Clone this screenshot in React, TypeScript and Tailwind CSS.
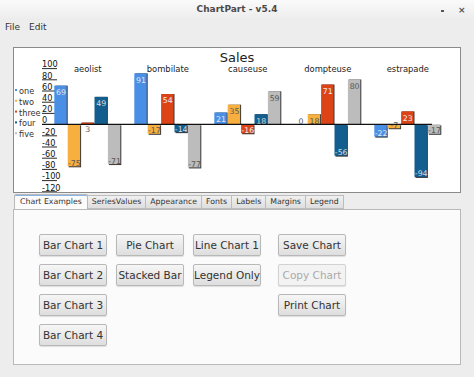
import React from 'react';

const series = [
  { name: 'one', color: '#4a8fe6', text: '#e6e6e6' },
  { name: 'two', color: '#f7b040', text: '#555555' },
  { name: 'three', color: '#dc4417', text: '#eeeeee' },
  { name: 'four', color: '#135e8e', text: '#dddddd' },
  { name: 'five', color: '#bcbcbc', text: '#555555' },
];

const groups = [
  { name: 'aeolist', values: [69, -75, 3, 49, -71] },
  { name: 'bombilate', values: [91, -17, 54, -14, -77] },
  { name: 'causeuse', values: [21, 35, -16, 18, 59] },
  { name: 'dompteuse', values: [0, 18, 71, -56, 80] },
  { name: 'estrapade', values: [-22, -7, 23, -94, -17] },
];

const ZERO = 124.3;
const SCALE = 0.56;
const BAR = 13.4;
const ticks = [100, 80, 60, 40, 20, 0, -20, -40, -60, -80, -100, -120];

const SalesChart: React.FC = () => {
  return (
    <svg width={446} height={144} viewBox="14 48 446 144" className="block" style={{ fontFamily: '"DejaVu Sans", sans-serif' }}>
      <rect x={14} y={48} width={446} height={144} fill="#ffffff" />
      <text x={237} y={62} fontSize={13} textAnchor="middle" fill="#222">Sales</text>

      {/* y axis */}
      {ticks.map((t) => {
        const y = ZERO - t * SCALE;
        return (
          <g key={t}>
            <text x={42} y={y - 1} fontSize={8.2} fill="#111">{t}</text>
            {t !== 0 && <line x1={42} x2={57} y1={y + 0.3} y2={y + 0.3} stroke="#111" strokeWidth={0.9} />}
          </g>
        );
      })}

      {/* legend */}
      {series.map((s, i) => {
        const by = 94 + i * 10.8;
        return (
          <g key={s.name}>
            <rect x={15} y={by - 5} width={2} height={2} fill={s.color} />
            <text x={19} y={by} fontSize={8.2} fill="#333">{s.name}</text>
          </g>
        );
      })}

      {/* bars */}
      {groups.map((g, gi) => {
        const start = 54.3 + gi * 80;
        return (
          <g key={g.name}>
            <text x={start + 33.5} y={72} fontSize={8.4} textAnchor="middle" fill="#222">{g.name}</text>
            {g.values.map((v, i) => {
              const s = series[i];
              const x = start + i * BAR;
              const h = Math.abs(v) * SCALE;
              const y = v > 0 ? ZERO - h : ZERO;
              const outside = h < 5;
              const ly = v > 0 ? y + 9.3 : ZERO + h - 0.5;
              return (
                <g key={i}>
                  {h > 0 && <rect x={x + 1} y={y + (v > 0 ? 0 : 1)} width={BAR - 1} height={h} fill="#3a3a3a" />}
                  {h > 0 && <rect x={x} y={y} width={BAR - 1} height={h} fill={s.color} />}
                  <text x={x + BAR / 2} y={ly} fontSize={7.8} textAnchor="middle" fill={outside ? '#555' : s.text}>{v}</text>
                </g>
              );
            })}
          </g>
        );
      })}

      <line x1={42} x2={432} y1={ZERO} y2={ZERO} stroke="#111" strokeWidth={1.3} />
    </svg>
  );
};

const Btn: React.FC<{ label: string; disabled?: boolean; className?: string }> = ({ label, disabled, className = '' }) => (
  <button
    className={
      'h-[22px] w-[68px] rounded-[2px] border text-[10.5px] leading-none whitespace-nowrap overflow-hidden shadow-[0_1px_1px_rgba(0,0,0,0.12)] ' +
      (disabled
        ? 'border-[#d2d2d2] bg-[#f3f3f3] text-[#aaaaaa] '
        : 'border-[#b8b8b8] bg-gradient-to-b from-[#f6f6f6] to-[#dedede] text-[#333333] ') +
      className
    }
  >
    {label}
  </button>
);

const tabs = ['Chart Examples', 'SeriesValues', 'Appearance', 'Fonts', 'Labels', 'Margins', 'Legend'];

export default function App() {
  return (
    <div className="w-[474px] h-[377px] bg-[#ededed] flex flex-col overflow-hidden" style={{ fontFamily: '"DejaVu Sans", sans-serif' }}>
      {/* title bar */}
      <div className="h-[20px] relative flex items-center justify-center bg-gradient-to-b from-[#fafafa] to-[#ececec]">
        <span className="text-[9px] font-bold text-[#4a4a4a]">ChartPart - v5.4</span>
        <span className="absolute left-[441px] top-[10px] w-[3px] h-[2px] bg-[#555]" />
        <span className="absolute left-[458px] top-[4px] text-[9px] font-bold text-[#555]">×</span>
      </div>

      {/* menu */}
      <div className="h-[16px] flex items-center gap-[9px] pl-[5px] text-[9px] text-[#333]">
        <span>File</span>
        <span>Edit</span>
      </div>

      {/* chart */}
      <div className="ml-[13px] mt-[11px] w-[448px] h-[146px] border border-[#8a8a8a] bg-white">
        <SalesChart />
      </div>

      {/* tabs */}
      <div className="ml-[14px] mt-[1px] h-[15px] flex items-end text-[7.8px] text-[#333]">
        {tabs.map((t, i) => (
          <div
            key={t}
            className={
              i === 0
                ? 'h-[15px] px-[5px] flex items-center bg-[#fbfbfb] border border-b-0 border-[#b9b9b9] rounded-t-[2px] shadow-[inset_0_1px_0_#86b4e6]'
                : 'h-[14px] px-[4px] flex items-center bg-gradient-to-b from-[#f0f0f0] to-[#dedede] border border-l-0 border-[#bdbdbd]'
            }
          >
            {t}
          </div>
        ))}
      </div>

      {/* tab content */}
      <div className="ml-[13px] w-[448px] h-[156px] border border-[#b9b9b9] bg-[#fbfbfb] pl-[25px] pt-[24px]">
        <div className="grid grid-cols-[68px_68px_68px_68px] gap-x-[9px] gap-y-[8px]">
          <Btn label="Bar Chart 1" />
          <Btn label="Pie Chart" />
          <Btn label="Line Chart 1" />
          <Btn label="Save Chart" className="ml-[8px]" />
          <Btn label="Bar Chart 2" />
          <Btn label="Stacked Bar" />
          <Btn label="Legend Only" />
          <Btn label="Copy Chart" disabled className="ml-[8px]" />
          <Btn label="Bar Chart 3" />
          <div />
          <div />
          <Btn label="Print Chart" className="ml-[8px]" />
          <Btn label="Bar Chart 4" />
        </div>
      </div>
    </div>
  );
}
